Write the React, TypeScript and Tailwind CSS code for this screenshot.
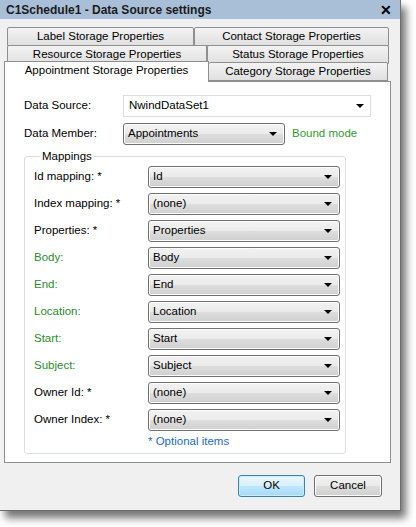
const font = { fontFamily: '"Liberation Sans", Arial, sans-serif' };

function Arrow() {
  return (
    <svg width="8" height="4" viewBox="0 0 8 4" className="shrink-0">
      <path d="M0 0H8L4 4Z" fill="#000" />
    </svg>
  );
}

function Combo({ value, className = "" }: { value: string; className?: string }) {
  return (
    <div
      className={`flex h-[22px] items-center justify-between rounded-[3px] border border-[#707070] bg-[linear-gradient(#f2f2f2_0%,#ebebeb_48%,#dddddd_52%,#cfcfcf_100%)] pl-[4px] pr-[7px] text-[11.5px] text-black shadow-[inset_0_0_0_1px_#fcfcfc] ${className}`}
    >
      <span>{value}</span>
      <Arrow />
    </div>
  );
}

function Tab({ label, className = "" }: { label: string; className?: string }) {
  return (
    <div
      className={`flex h-[19px] items-center justify-center rounded-t-[2px] border border-[#8e8f8f] bg-[linear-gradient(#f3f3f3,#e0e0e0)] text-[11.5px] text-black ${className}`}
    >
      {label}
    </div>
  );
}

const mappings: [string, string, boolean][] = [
  ["Id mapping: *", "Id", false],
  ["Index mapping: *", "(none)", false],
  ["Properties: *", "Properties", false],
  ["Body:", "Body", true],
  ["End:", "End", true],
  ["Location:", "Location", true],
  ["Start:", "Start", true],
  ["Subject:", "Subject", true],
  ["Owner Id: *", "(none)", false],
  ["Owner Index: *", "(none)", false],
];

export default function App() {
  return (
    <div className="h-[527px] w-[416px] bg-white" style={font}>
      <div className="flex h-[511px] w-[401px] flex-col border-r border-b border-[#6d6d6d] bg-[#f0f0f0] shadow-[5px_7px_8px_rgba(0,0,0,0.55)]">
        <div className="flex h-[19px] items-center justify-between bg-[#a9bfd8] pl-[6px] pr-[8px]">
          <span className="text-[12px] font-bold text-[#1b1b1b]">C1Schedule1 - Data Source settings</span>
          <span className="text-[14px] font-bold leading-none text-black">✕</span>
        </div>

        <div className="mt-[8px] flex pl-[7px]">
          <Tab label="Label Storage Properties" className="w-[187px]" />
          <Tab label="Contact Storage Properties" className="w-[195px]" />
        </div>
        <div className="-mt-px flex pl-[7px]">
          <Tab label="Resource Storage Properties" className="w-[200px]" />
          <Tab label="Status Storage Properties" className="w-[182px]" />
        </div>
        <div className="relative z-10 -mt-[3px] flex items-end pl-[4px]">
          <div className="flex h-[21px] w-[205px] items-center justify-center border border-b-0 border-[#8e8f8f] bg-white pb-[2px] text-[11.5px] text-black">
            Appointment Storage Properties
          </div>
          <Tab label="Category Storage Properties" className="mb-px w-[179px] border-l-0" />
        </div>

        <div className="-mt-px ml-[4px] h-[382px] w-[387px] border border-[#8e8f8f] bg-white px-[19px] pt-[13px]">
          <div className="flex items-center text-[11.5px] text-black">
            <span className="w-[99px]">Data Source:</span>
            <div className="flex h-[22px] w-[248px] items-center justify-between border border-[#dcdcdc] pl-[5px] pr-[6px]">
              <span>NwindDataSet1</span>
              <Arrow />
            </div>
          </div>
          <div className="mt-[6px] flex items-center text-[11.5px] text-black">
            <span className="w-[99px]">Data Member:</span>
            <Combo value="Appointments" className="w-[162px]" />
            <span className="ml-[7px] text-[#2f9a2f]">Bound mode</span>
          </div>

          <fieldset className="mt-[4px] w-[321px] rounded-[3px] border border-[#d5dfe5] pr-[5px] pb-[4px] pl-[9px]">
            <legend className="ml-[6px] px-[2px] text-[11.5px] leading-[15px] text-black">Mappings</legend>
            <div className="mt-[2px] flex flex-col gap-[5px]">
              {mappings.map(([label, value, green]) => (
                <div key={label} className="flex items-center text-[11.5px]">
                  <span className={`w-[114px] ${green ? "text-[#2a8c2a]" : "text-black"}`}>{label}</span>
                  <Combo value={value} className="w-[192px]" />
                </div>
              ))}
            </div>
            <div className="mt-[3px] pl-[114px] text-[11.5px] leading-[15px] text-[#1c6cc4]">* Optional items</div>
          </fieldset>
        </div>

        <div className="mt-[12px] flex justify-end gap-[9px] pr-[18px]">
          <button className="h-[22px] w-[67px] rounded-[3px] border border-[#3c7fb1] bg-[linear-gradient(#eaf6fd_0%,#d9f0fc_48%,#bee6fd_52%,#a7d9f5_100%)] text-[11.5px] text-black shadow-[inset_0_0_0_1px_#c9ecfd]">
            OK
          </button>
          <button className="h-[22px] w-[68px] rounded-[3px] border border-[#707070] bg-[linear-gradient(#f2f2f2_0%,#ebebeb_48%,#dddddd_52%,#cfcfcf_100%)] text-[11.5px] text-black shadow-[inset_0_0_0_1px_#fcfcfc]">
            Cancel
          </button>
        </div>
      </div>
    </div>
  );
}
